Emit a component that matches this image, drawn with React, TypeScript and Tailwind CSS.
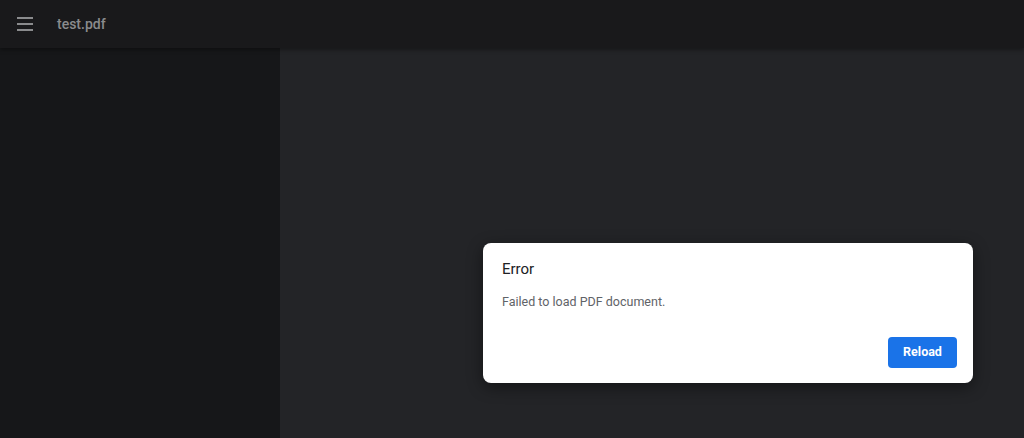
export default function App() {
  return (
    <div className="flex h-[438px] w-[1024px] flex-col overflow-hidden bg-[#232427] font-['Roboto',sans-serif]">
      <header className="relative z-10 flex h-12 shrink-0 items-center bg-[#19191b] shadow-[0_2px_4px_rgba(0,0,0,0.35)]">
        <button className="ml-[17px] flex h-4 w-4 flex-col justify-between py-[1px]">
          <span className="h-[2px] w-4 bg-[#8a8b8d]" />
          <span className="h-[2px] w-4 bg-[#8a8b8d]" />
          <span className="h-[2px] w-4 bg-[#8a8b8d]" />
        </button>
        <span className="ml-6 text-[14px] font-medium text-[#8a8b8d]">test.pdf</span>
      </header>
      <div className="flex flex-1">
        <aside className="w-[280px] shrink-0 bg-[#161719]" />
        <main className="flex flex-1 justify-end pt-[195px] pr-[51px]">
          <div className="flex h-[140px] w-[490px] flex-col rounded-lg bg-white pl-[19px] pr-[16px] pt-[17px] pb-[15px] shadow-[0_4px_16px_rgba(0,0,0,0.45)]">
            <h2 className="text-[15px] leading-[18px] text-[#202124]">Error</h2>
            <p className="mt-[16px] text-[12.5px] leading-[16px] text-[#5f6368]">Failed to load PDF document.</p>
            <div className="mt-auto flex justify-end">
              <button className="h-[31px] w-[69px] rounded-[4px] bg-[#1a73e8] text-[12.5px] font-bold text-white">
                Reload
              </button>
            </div>
          </div>
        </main>
      </div>
    </div>
  )
}
